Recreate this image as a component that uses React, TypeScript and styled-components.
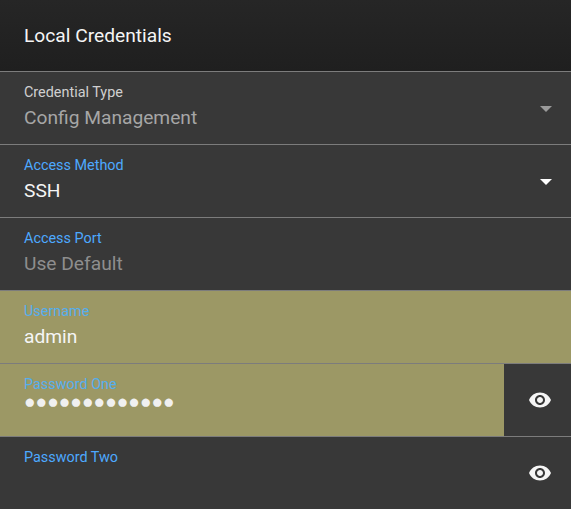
import React from "react";
import styled, { createGlobalStyle } from "styled-components";

const Global = createGlobalStyle`
  html, body { margin: 0; padding: 0; background: #363636; }
  body { font-family: Roboto, "Liberation Sans", sans-serif; }
`;

const Page = styled.div`
  width: 571px;
  height: 509px;
  overflow: hidden;
  background: #363636;
  display: flex;
  flex-direction: column;
`;

const Header = styled.header`
  height: 71px;
  flex: none;
  box-sizing: border-box;
  padding-left: 24px;
  display: flex;
  align-items: center;
  font-size: 19.2px;
  color: #f5f5f5;
  background: linear-gradient(#262626, #1f1f1f);
`;

const Row = styled.div`
  height: 73px;
  flex: none;
  box-sizing: border-box;
  border-top: 1px solid #7c7c7c;
  display: flex;
  align-items: stretch;
  background: #383838;
`;

const Field = styled.div<{ $filled?: boolean }>`
  flex: 1;
  min-width: 0;
  box-sizing: border-box;
  padding: 13px 0 0 24px;
  background: ${(p) => (p.$filled ? "#9c9865" : "transparent")};
`;

const Label = styled.label<{ $tone?: "idle" | "active" | "onFill" }>`
  display: block;
  font-size: 14.4px;
  line-height: 16px;
  color: ${(p) =>
    p.$tone === "active" ? "#4da9ff" : p.$tone === "onFill" ? "#56aeee" : "#d0d0d0"};
`;

const Value = styled.div<{ $tone?: "bright" | "muted" | "placeholder" }>`
  margin-top: 4px;
  font-size: 19.2px;
  line-height: 26px;
  color: ${(p) =>
    p.$tone === "muted" ? "#a6a6a6" : p.$tone === "placeholder" ? "#8e8e8e" : "#f5f5f5"};
`;

const Dots = styled.div`
  font-family: "Liberation Sans", sans-serif;
  font-size: 19.2px;
  line-height: 18px;
  color: #f0f0f0;
`;

const Adornment = styled.div<{ $wide?: boolean }>`
  flex: none;
  width: ${(p) => (p.$wide ? "67px" : "50px")};
  box-sizing: border-box;
  padding: ${(p) => (p.$wide ? "0" : "2px")} 19px 0 0;
  display: flex;
  align-items: center;
  justify-content: flex-end;
  background: #383838;
`;

const Caret = styled.svg<{ $muted?: boolean }>`
  width: 12px;
  height: 6px;
  fill: ${(p) => (p.$muted ? "#9a9a9a" : "#ffffff")};
`;

const Eye = styled.svg`
  width: 24px;
  height: 24px;
  fill: #f5f5f5;
`;

const CaretIcon = ({ muted }: { muted?: boolean }) => (
  <Adornment>
    <Caret $muted={muted} viewBox="0 0 12 6">
      <path d="M0 0h12L6 6z" />
    </Caret>
  </Adornment>
);

const EyeIcon = () => (
  <Adornment $wide>
    <Eye viewBox="0 0 24 24">
      <path d="M12 4.5C7 4.5 2.73 7.61 1 12c1.73 4.39 6 7.5 11 7.5s9.27-3.11 11-7.5c-1.73-4.39-6-7.5-11-7.5zM12 17c-2.76 0-5-2.24-5-5s2.24-5 5-5 5 2.24 5 5-2.24 5-5 5zm0-8c-1.66 0-3 1.34-3 3s1.34 3 3 3 3-1.34 3-3-1.34-3-3-3z" />
    </Eye>
  </Adornment>
);

export default function App() {
  return (
    <Page>
      <Global />
      <Header>Local Credentials</Header>
      <Row>
        <Field>
          <Label>Credential Type</Label>
          <Value $tone="muted">Config Management</Value>
        </Field>
        <CaretIcon muted />
      </Row>
      <Row>
        <Field>
          <Label $tone="active">Access Method</Label>
          <Value>SSH</Value>
        </Field>
        <CaretIcon />
      </Row>
      <Row>
        <Field>
          <Label $tone="active">Access Port</Label>
          <Value $tone="placeholder">Use Default</Value>
        </Field>
      </Row>
      <Row>
        <Field $filled>
          <Label $tone="onFill">Username</Label>
          <Value>admin</Value>
        </Field>
      </Row>
      <Row>
        <Field $filled>
          <Label $tone="onFill">Password One</Label>
          <Dots>●●●●●●●●●●●●●</Dots>
        </Field>
        <EyeIcon />
      </Row>
      <Row>
        <Field>
          <Label $tone="active">Password Two</Label>
        </Field>
        <EyeIcon />
      </Row>
    </Page>
  );
}
